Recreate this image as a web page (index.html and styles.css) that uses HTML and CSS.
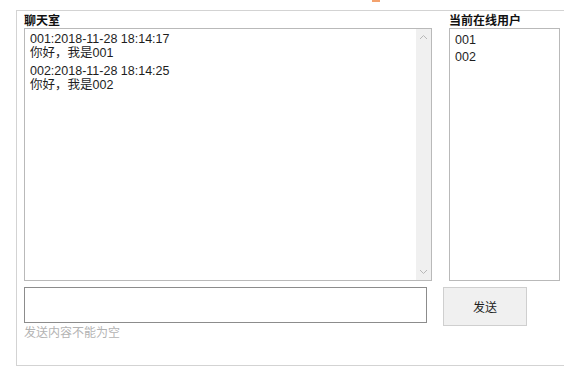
FILE: index.html
```html
<!DOCTYPE html>
<html lang="zh-CN">
<head>
<meta charset="utf-8">
<title>聊天室</title>
<link rel="stylesheet" href="styles.css">
</head>
<body>
<div class="tab-mark"></div>
<div class="panel">
  <div class="top-row">
    <div class="chat-col">
      <div class="label">聊天室</div>
      <div class="chat-box">
        <div class="messages">
          <div class="msg">
            <div>001:2018-11-28 18:14:17</div>
            <div>你好，我是001</div>
          </div>
          <div class="msg">
            <div>002:2018-11-28 18:14:25</div>
            <div>你好，我是002</div>
          </div>
        </div>
        <div class="scrollbar">
          <svg class="chev" width="9" height="6" viewBox="0 0 9 6"><path d="M1 5 L4.5 1.5 L8 5" fill="none" stroke="#b8b8b8" stroke-width="1"/></svg>
          <svg class="chev" width="9" height="6" viewBox="0 0 9 6"><path d="M1 1 L4.5 4.5 L8 1" fill="none" stroke="#b8b8b8" stroke-width="1"/></svg>
        </div>
      </div>
    </div>
    <div class="users-col">
      <div class="label">当前在线用户</div>
      <div class="users-box">
        <div class="user">001</div>
        <div class="user">002</div>
      </div>
    </div>
  </div>
  <div class="bottom-row">
    <div class="input-col">
      <div class="input-box"></div>
      <div class="hint">发送内容不能为空</div>
    </div>
    <button class="send-btn">发送</button>
  </div>
</div>
</body>
</html>
```

FILE: styles.css
```css
html, body {
  margin: 0;
  padding: 0;
  background: #ffffff;
  overflow: hidden;
}
body {
  width: 564px;
  height: 368px;
  font-family: "Liberation Sans", "Noto Sans CJK SC", sans-serif;
  font-size: 12.5px;
  color: #1e1e1e;
}
.tab-mark {
  margin-left: 372px;
  width: 8px;
  height: 2px;
  background: #f3a26e;
}
.panel {
  margin-top: 8px;
  margin-left: 16px;
  width: 548px;
  height: 356px;
  box-sizing: border-box;
  border: 1px solid #d3d3d3;
  border-right: none;
  padding-left: 7px;
}
.top-row {
  display: flex;
  gap: 17px;
}
.label {
  font-weight: bold;
  font-size: 12px;
  line-height: 14px;
  padding-top: 3px;
  color: #111;
}
.chat-col {
  width: 408px;
}
.chat-box {
  height: 253px;
  box-sizing: border-box;
  border: 1px solid #b9b9b9;
  display: flex;
}
.messages {
  flex: 1;
  padding: 3px 5px;
  line-height: 14px;
}
.msg {
  margin-bottom: 4px;
}
.scrollbar {
  width: 15px;
  background: #f0f0f0;
  display: flex;
  flex-direction: column;
  justify-content: space-between;
  align-items: center;
  padding: 5px 0;
}
.chev {
  display: block;
}
.users-col {
  width: 111px;
}
.users-box {
  height: 253px;
  box-sizing: border-box;
  border: 1px solid #b9b9b9;
  padding: 3px 5px;
}
.user {
  line-height: 17px;
}
.bottom-row {
  display: flex;
  align-items: flex-start;
  gap: 16px;
  margin-top: 6px;
}
.input-col {
  width: 403px;
}
.input-box {
  height: 36px;
  box-sizing: border-box;
  border: 1px solid #8c8c8c;
  background: #fff;
}
.hint {
  margin-top: 3px;
  font-size: 12px;
  line-height: 14px;
  color: #b3b3b3;
}
.send-btn {
  width: 84px;
  height: 39px;
  box-sizing: border-box;
  border: 1px solid #cfcfcf;
  background: #f0f0f0;
  font-family: "Liberation Sans", "Noto Sans CJK SC", sans-serif;
  font-size: 12px;
  color: #1e1e1e;
  padding: 0;
  margin: 0;
}
```
